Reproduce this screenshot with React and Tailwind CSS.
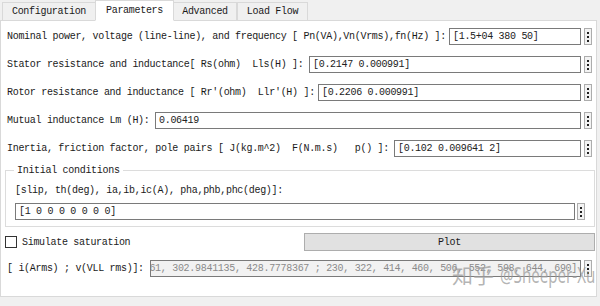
const font = { fontFamily: "'Liberation Mono', 'Noto Sans CJK SC', monospace" };

function Dots() {
  return (
    <div className="w-[8px] h-[17px] shrink-0 border border-[#adadad] bg-[#f3f3f3] flex flex-col items-center justify-center gap-[2px]">
      <div className="w-[2px] h-[2px] bg-[#222]" />
      <div className="w-[2px] h-[2px] bg-[#222]" />
      <div className="w-[2px] h-[2px] bg-[#222]" />
    </div>
  );
}

function Field({ value, muted }) {
  return (
    <div className={`flex-1 min-w-0 h-[17px] border border-[#7a7a7a] flex items-center px-[3px] overflow-hidden whitespace-nowrap ${muted ? 'bg-[#f2f2f2] text-[#8a8a8a] justify-end' : 'bg-white text-[#222]'}`}>
      <span className="shrink-0">{value}</span>
    </div>
  );
}

function Row({ label, width, value, muted }) {
  return (
    <div className="flex items-center h-[17px]">
      <div className="shrink-0 whitespace-pre" style={{ width }}>{label}</div>
      <Field value={value} muted={muted} />
      <div className="ml-[3px]"><Dots /></div>
    </div>
  );
}

const tabs = [
  { name: 'Configuration', w: 'w-[94px]' },
  { name: 'Parameters', w: 'w-[79px]', active: true },
  { name: 'Advanced', w: 'w-[64px]' },
  { name: 'Load Flow', w: 'w-[71px]' },
];

export default function App() {
  return (
    <div className="w-[600px] h-[306px] bg-[#f0f0f0] relative overflow-hidden text-[10px] tracking-[-0.3px] text-[#1a1a1a]" style={font}>
      {/* tabs */}
      <div className="h-[20px] flex items-end pl-[2px]">
        {tabs.map((t) => (
          <div
            key={t.name}
            className={`${t.w} flex items-center justify-center border border-[#d9d9d9] ${t.active ? 'h-[21px] bg-white border-b-white relative z-10 -mb-[1px] -mx-[1px]' : 'h-[18px] bg-[#f0f0f0] border-b-0'}`}
          >
            {t.name}
          </div>
        ))}
      </div>

      {/* panel */}
      <div className="w-[597px] h-[277px] bg-white border border-[#d9d9d9] flex flex-col">
        <div className="pl-[6px] pr-[4px] pt-[7px] flex flex-col gap-[11px]">
          <Row width="442px" label="Nominal power, voltage (line-line), and frequency [ Pn(VA),Vn(Vrms),fn(Hz) ]:" value="[1.5+04 380 50]" />
          <Row width="302px" label="Stator resistance and inductance[ Rs(ohm)  Lls(H) ]:" value="[0.2147 0.000991]" />
          <Row width="311px" label="Rotor resistance and inductance [ Rr'(ohm)  Llr'(H) ]:" value="[0.2206 0.000991]" />
          <Row width="148px" label="Mutual inductance Lm (H):" value="0.06419" />
          <Row width="387px" label="Inertia, friction factor, pole pairs [ J(kg.m^2)  F(N.m.s)   p() ]:" value="[0.102 0.009641 2]" />
        </div>

        {/* group box */}
        <div className="ml-[4px] mr-[1px] mt-[13px] relative border border-[#dcdcdc] pl-[9px] pr-[9px] pt-[13px] pb-[6px]">
          <div className="absolute -top-[7px] left-[8px] bg-white px-[3px] leading-[13px]">Initial conditions</div>
          <div className="leading-[13px]">[slip, th(deg), ia,ib,ic(A), pha,phb,phc(deg)]:</div>
          <div className="mt-[6px] flex items-center">
            <Field value="[1 0 0 0 0 0 0 0]" />
            <div className="ml-[2px]"><Dots /></div>
          </div>
        </div>

        {/* saturation + plot */}
        <div className="mt-[6px] flex items-center pl-[4px] pr-[1px]">
          <div className="flex items-center gap-[5px] flex-1">
            <div className="w-[12px] h-[12px] border border-[#333] bg-white" />
            <span className="text-[#222]">Simulate saturation</span>
          </div>
          <div className="w-[291px] h-[18px] bg-[#e1e1e1] border border-[#adadad] flex items-center justify-center">Plot</div>
        </div>

        {/* last row */}
        <div className="mt-[9px] pl-[6px] pr-[4px]">
          <Row muted width="143px" label="[ i(Arms) ; v(VLL rms)]:" value="[101.2, 154.3, 214.3946561, 302.9841135, 428.7778367 ; 230, 322, 414, 460, 506, 552, 598, 644, 690]" />
        </div>
      </div>

      {/* watermark */}
      <div
        className="absolute left-[452px] top-[260px] flex items-center text-[#9c9c9c]/75 whitespace-nowrap pointer-events-none tracking-normal"
        style={{ fontFamily: "'Noto Sans', 'Noto Sans CJK SC', sans-serif" }}
      >
        <span className="text-[21px]">知乎</span>
        <span className="ml-[6px] text-[21px] inline-block origin-left scale-x-[0.72]">@Sheeper-Xu</span>
      </div>
    </div>
  );
}
